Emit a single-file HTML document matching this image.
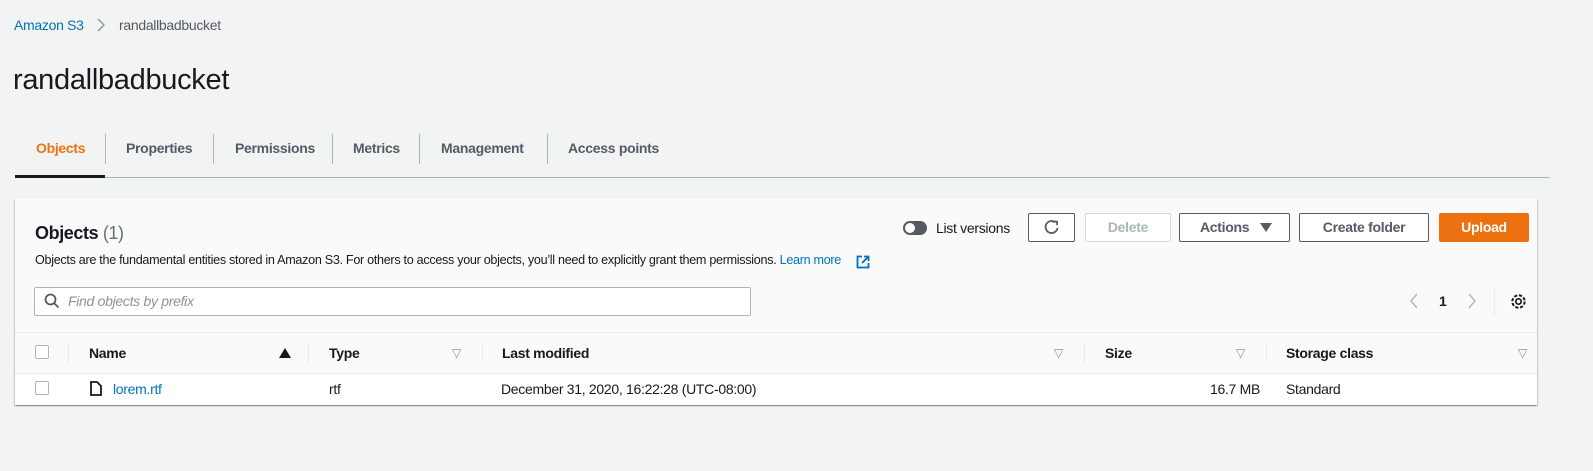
<!DOCTYPE html>
<html><head><meta charset="utf-8"><style>
*{box-sizing:border-box;margin:0;padding:0}
body{width:1593px;height:471px;background:#f2f3f3;font-family:"Liberation Sans",sans-serif;color:#16191f;position:relative;overflow:hidden}
.a{position:absolute;white-space:nowrap}
.tab{position:absolute;top:140px;font-size:14px;font-weight:bold;color:#545b64;letter-spacing:-0.3px}
.sep{position:absolute;top:134px;width:1px;height:30px;background:#aab7b8}
.btn{position:absolute;top:213px;height:29px;border:1px solid #545b64;border-radius:2px;background:#fff;font-size:14px;font-weight:bold;color:#545b64;text-align:center;line-height:27px;letter-spacing:-0.3px}
.th{position:absolute;top:345px;font-size:14px;font-weight:bold;letter-spacing:-0.3px}
.cs{position:absolute;top:343px;width:1px;height:20px;background:#eaeded}
.tri{position:absolute;top:346px;font-size:12px;color:#879596}
.td{position:absolute;top:381px;font-size:14px;letter-spacing:-0.3px}
.cb{position:absolute;width:14px;height:14px;border:1px solid #aab7b8;border-radius:2px;background:#fff}
</style></head><body>
<div class="a" style="left:14px;top:17px;font-size:14px;color:#0073bb;letter-spacing:-0.3px">Amazon S3</div>
<svg class="a" style="left:96px;top:18px" width="10" height="14"><path d="M2 1l6 6-6 6" fill="none" stroke="#879596" stroke-width="1.3"/></svg>
<div class="a" style="left:119px;top:17px;font-size:14px;color:#545b64;letter-spacing:-0.3px">randallbadbucket</div>
<div class="a" style="left:13px;top:64px;font-size:29px;color:#16191f;letter-spacing:-0.3px">randallbadbucket</div>
<div class="tab" style="left:36px;color:#ec7211">Objects</div>
<div class="sep" style="left:105px"></div>
<div class="tab" style="left:126px">Properties</div>
<div class="sep" style="left:213px"></div>
<div class="tab" style="left:235px">Permissions</div>
<div class="sep" style="left:332px"></div>
<div class="tab" style="left:353px">Metrics</div>
<div class="sep" style="left:419px"></div>
<div class="tab" style="left:441px">Management</div>
<div class="sep" style="left:547px"></div>
<div class="tab" style="left:568px">Access points</div>
<div class="a" style="left:15px;top:177px;width:1535px;height:1px;background:#aab7b8"></div>
<div class="a" style="left:15px;top:175px;width:90px;height:3px;background:#16191f"></div>

<div class="a" style="left:15px;top:199px;width:1522px;height:206px;background:#fafafa;box-shadow:0 1px 1px rgba(0,28,36,.3),1px 1px 1px rgba(0,28,36,.15),-1px 1px 1px rgba(0,28,36,.15)"></div>
<div class="a" style="left:35px;top:223px;font-size:18px;font-weight:bold;letter-spacing:-0.4px">Objects <span style="font-weight:normal;color:#687078">(1)</span></div>
<div class="a" style="left:35px;top:253px;font-size:12.6px;color:#16191f;letter-spacing:-0.3px">Objects are the fundamental entities stored in Amazon S3. For others to access your objects, you’ll need to explicitly grant them permissions. <span style="color:#0073bb">Learn more</span></div>
<svg class="a" style="left:856px;top:255px" width="14" height="14"><path d="M6 1.5H1.5v11h11V8M8 1.5h4.5V6M12.5 1.5L6 8" fill="none" stroke="#0073bb" stroke-width="1.8"/></svg>
<div class="a" style="left:34px;top:287px;width:717px;height:29px;border:1px solid #aab7b8;border-radius:2px;background:#fff"></div>
<svg class="a" style="left:44px;top:293px" width="16" height="16"><circle cx="6.5" cy="6.5" r="5" fill="none" stroke="#545b64" stroke-width="1.8"/><path d="M10 10l4.5 4.5" stroke="#545b64" stroke-width="1.8"/></svg>
<div class="a" style="left:68px;top:293px;font-size:14px;font-style:italic;color:#879596;letter-spacing:-0.3px">Find objects by prefix</div>

<div class="a" style="left:903px;top:221px;width:24px;height:14px;border-radius:7px;background:#545b64"></div>
<div class="a" style="left:905px;top:223px;width:10px;height:10px;border-radius:5px;background:#fff"></div>
<div class="a" style="left:936px;top:220px;font-size:14px;letter-spacing:-0.3px">List versions</div>
<div class="btn" style="left:1028px;width:47px"></div>
<svg class="a" style="left:1043px;top:219px" width="18" height="18"><path d="M12.5 3.5A6 6 0 1 0 14.5 9" fill="none" stroke="#545b64" stroke-width="1.8"/><path d="M9 2.5h5v-0.5V6" fill="none" stroke="#545b64" stroke-width="1.8"/></svg>
<div class="btn" style="left:1085px;width:86px;border-color:#d5dbdb;color:#aab7b8">Delete</div>
<div class="btn" style="left:1179px;width:111px;text-align:left;padding-left:20px">Actions</div>
<svg class="a" style="left:1259px;top:222px" width="14" height="11"><path d="M1 1h12L7 10z" fill="#545b64"/></svg>
<div class="btn" style="left:1299px;width:130px">Create folder</div>
<div class="btn" style="left:1439px;width:90px;background:#ec7211;border-color:#ec7211;color:#fff">Upload</div>

<svg class="a" style="left:1408px;top:292px" width="12" height="18"><path d="M9 2L3 9l6 7" fill="none" stroke="#aab7b8" stroke-width="1.4"/></svg>
<div class="a" style="left:1439px;top:293px;font-size:14px;font-weight:bold">1</div>
<svg class="a" style="left:1466px;top:292px" width="12" height="18"><path d="M3 2l6 7-6 7" fill="none" stroke="#aab7b8" stroke-width="1.4"/></svg>
<div class="a" style="left:1494px;top:288px;width:1px;height:28px;background:#eaeded"></div>
<svg class="a" style="left:1509px;top:292px" width="19" height="19"><circle cx="9.5" cy="9.5" r="2.7" fill="none" stroke="#16191f" stroke-width="1.7"/><circle cx="9.5" cy="9.5" r="6.2" fill="none" stroke="#16191f" stroke-width="2" stroke-dasharray="3.2 1.7"/></svg>

<div class="a" style="left:15px;top:332px;width:1522px;height:1px;background:#eaeded"></div>
<div class="cb" style="left:35px;top:345px"></div>
<div class="cs" style="left:68px"></div>
<div class="th" style="left:89px">Name</div>
<svg class="a" style="left:279px;top:348px" width="12" height="10"><path d="M6 0l6 10H0z" fill="#16191f"/></svg>
<div class="cs" style="left:308px"></div>
<div class="th" style="left:329px">Type</div>
<div class="tri" style="left:452px">▽</div>
<div class="cs" style="left:482px"></div>
<div class="th" style="left:502px">Last modified</div>
<div class="tri" style="left:1054px">▽</div>
<div class="cs" style="left:1084px"></div>
<div class="th" style="left:1105px">Size</div>
<div class="tri" style="left:1236px">▽</div>
<div class="cs" style="left:1266px"></div>
<div class="th" style="left:1286px">Storage class</div>
<div class="tri" style="left:1518px">▽</div>
<div class="a" style="left:15px;top:373px;width:1522px;height:31px;background:#fff;border-top:1px solid #eaeded"></div>
<div class="cb" style="left:35px;top:381px"></div>
<svg class="a" style="left:90px;top:381px" width="12" height="15"><path d="M1 1h6l4 4v9H1z" fill="none" stroke="#16191f" stroke-width="1.8"/></svg>
<div class="td" style="left:113px;color:#0073bb">lorem.rtf</div>
<div class="td" style="left:329px">rtf</div>
<div class="td" style="left:501px">December 31, 2020, 16:22:28 (UTC-08:00)</div>
<div class="td" style="left:1210px">16.7 MB</div>
<div class="td" style="left:1286px">Standard</div>
</body></html>
